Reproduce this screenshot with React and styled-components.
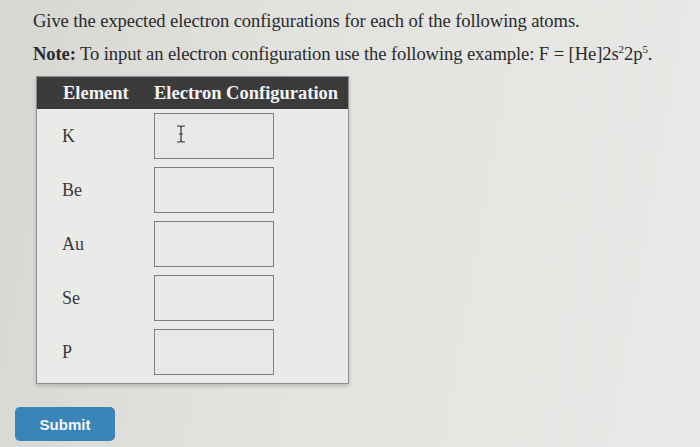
import React from "react";
import styled, { createGlobalStyle } from "styled-components";

const GlobalStyle = createGlobalStyle`
  html, body {
    margin: 0;
    padding: 0;
  }
  body {
    width: 700px;
    height: 447px;
    overflow: hidden;
    background: linear-gradient(100deg, #d6d6d3 0%, #e2e2df 40%, #e9e9e7 100%);
    font-family: "Liberation Serif", "Times New Roman", serif;
    color: #2b2b2b;
  }
`;

const Page = styled.div`
  padding: 7px 0 0 33px;
`;

const Prompt = styled.p`
  margin: 0;
  font-size: 18.6px;
  line-height: 28px;
  letter-spacing: -0.1px;
`;

const Sup = styled.sup`
  font-size: 11px;
`;

const Table = styled.div`
  margin-top: 8px;
  margin-left: 3px;
  width: 311px;
  background: #eaeae8;
  border: 1px solid #8d8d8b;
  box-shadow: 0 2px 4px rgba(0, 0, 0, 0.18);
  padding-bottom: 4px;
`;

const Header = styled.div`
  display: grid;
  grid-template-columns: 117px 1fr;
  height: 32px;
  align-items: center;
  background: #3b3b3c;
  color: #f4f4f4;
  font-weight: bold;
  font-size: 18.5px;
`;

const HeadCell = styled.div`
  padding-left: ${(p) => p.$pad}px;
`;

const Row = styled.div`
  display: grid;
  grid-template-columns: 117px 120px;
  align-items: center;
  height: 54px;
  &:first-of-type {
    margin-top: 2px;
  }
`;

const Label = styled.div`
  padding-left: 25px;
  font-size: 18px;
  color: #3a3a3a;
`;

const Box = styled.div`
  position: relative;
  height: 44px;
  border: 1px solid #7e7e7c;
  background: #e8e8e6;
`;

const Cursor = styled.svg`
  position: absolute;
  left: 21px;
  top: 11px;
`;

const Submit = styled.button`
  margin: 23px 0 0 -18px;
  width: 100px;
  height: 34px;
  border: none;
  border-radius: 5px;
  background: #3985b9;
  color: #f2f6fa;
  font-family: "Liberation Sans", Arial, sans-serif;
  font-weight: bold;
  font-size: 15px;
`;

const elements = ["K", "Be", "Au", "Se", "P"];

export default function App() {
  return (
    <>
      <GlobalStyle />
      <Page>
        <Prompt>Give the expected electron configurations for each of the following atoms.</Prompt>
        <Prompt>
          <b>Note:</b> To input an electron configuration use the following example: F = [He]2s
          <Sup>2</Sup>2p<Sup>5</Sup>.
        </Prompt>
        <Table>
          <Header>
            <HeadCell $pad={26}>Element</HeadCell>
            <HeadCell $pad={0}>Electron Configuration</HeadCell>
          </Header>
          {elements.map((el, i) => (
            <Row key={el}>
              <Label>{el}</Label>
              <Box>
                {i === 0 && (
                  <Cursor width="10" height="18" viewBox="0 0 10 18">
                    <path d="M1 1h3l1 1 1-1h3M5 2v14M1 17h3l1-1 1 1h3M3 9h4" stroke="#333" strokeWidth="1.2" fill="none" />
                  </Cursor>
                )}
              </Box>
            </Row>
          ))}
        </Table>
        <Submit>Submit</Submit>
      </Page>
    </>
  );
}
